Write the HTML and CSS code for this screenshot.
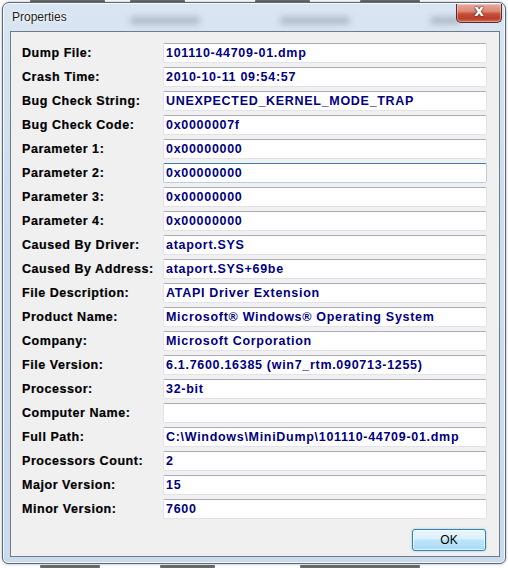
FILE: index.html
```html
<!DOCTYPE html>
<html>
<head>
<meta charset="utf-8">
<link rel="stylesheet" href="styles.css">
</head>
<body>
<div class="backdrop">
  <span class="topsmear t1"></span><span class="topsmear t2"></span><span class="topsmear t3"></span><span class="topsmear t4"></span>
  <span class="topsmear b1"></span><span class="topsmear b2"></span><span class="topsmear b3"></span>
  <div class="window">
    <div class="titlebar">
      <span class="smear s1"></span><span class="smear s2"></span><span class="smear s3"></span>
      <span class="title">Properties</span>
      <div class="close"><span class="xglyph">x</span></div>
    </div>
    <div class="client">
      <div class="props">
        <div class="lbl">Dump File:</div><div class="box">101110-44709-01.dmp</div>
        <div class="lbl">Crash Time:</div><div class="box">2010-10-11 09:54:57</div>
        <div class="lbl">Bug Check String:</div><div class="box">UNEXPECTED_KERNEL_MODE_TRAP</div>
        <div class="lbl">Bug Check Code:</div><div class="box">0x0000007f</div>
        <div class="lbl">Parameter 1:</div><div class="box">0x00000000</div>
        <div class="lbl">Parameter 2:</div><div class="box focus">0x00000000</div>
        <div class="lbl">Parameter 3:</div><div class="box">0x00000000</div>
        <div class="lbl">Parameter 4:</div><div class="box">0x00000000</div>
        <div class="lbl">Caused By Driver:</div><div class="box">ataport.SYS</div>
        <div class="lbl">Caused By Address:</div><div class="box">ataport.SYS+69be</div>
        <div class="lbl">File Description:</div><div class="box">ATAPI Driver Extension</div>
        <div class="lbl">Product Name:</div><div class="box">Microsoft® Windows® Operating System</div>
        <div class="lbl">Company:</div><div class="box">Microsoft Corporation</div>
        <div class="lbl">File Version:</div><div class="box">6.1.7600.16385 (win7_rtm.090713-1255)</div>
        <div class="lbl">Processor:</div><div class="box">32-bit</div>
        <div class="lbl">Computer Name:</div><div class="box"></div>
        <div class="lbl">Full Path:</div><div class="box">C:\Windows\MiniDump\101110-44709-01.dmp</div>
        <div class="lbl">Processors Count:</div><div class="box">2</div>
        <div class="lbl">Major Version:</div><div class="box">15</div>
        <div class="lbl">Minor Version:</div><div class="box">7600</div>
      </div>
      <div class="actions"><button class="ok">OK</button></div>
    </div>
  </div>
</div>
</body>
</html>
```
FILE: styles.css
```css
html, body {
  margin: 0;
  padding: 0;
}
body {
  width: 508px;
  height: 568px;
  overflow: hidden;
  background: #ffffff;
}
.backdrop {
  position: relative;
  width: 508px;
  height: 568px;
  padding: 2px 0 0 2px;
  box-sizing: border-box;
}
.topsmear {
  position: absolute;
  height: 3px;
  background: #6a6a6a;
  border-radius: 1px;
}
.t1 { top: 0; left: 30px; width: 75px; }
.t2 { top: 0; left: 130px; width: 55px; }
.t3 { top: 0; left: 255px; width: 55px; }
.t4 { top: 0; left: 360px; width: 60px; }
.b1 { top: 565px; left: 40px; width: 60px; }
.b2 { top: 565px; left: 160px; width: 55px; }
.b3 { top: 565px; left: 300px; width: 120px; }
.window {
  position: relative;
  width: 504px;
  height: 562px;
  box-sizing: border-box;
  border: 1px solid #5a6b7c;
  border-radius: 7px 7px 6px 6px;
  background: linear-gradient(to bottom, #d9e5f2 0%, #cfdeee 30%, #c9daec 100%);
  box-shadow: inset 0 0 0 1px rgba(255,255,255,0.75), 0 0 3px rgba(0,0,0,0.35);
  display: flex;
  flex-direction: column;
  padding: 0 5px 6px 7px;
}
.titlebar {
  position: relative;
  height: 28px;
  flex: none;
  display: flex;
  align-items: center;
}
.smear {
  position: absolute;
  top: 14px;
  height: 7px;
  border-radius: 4px;
  background: rgba(90, 100, 115, 0.35);
  filter: blur(3px);
}
.s1 { left: 120px; width: 70px; }
.s2 { left: 270px; width: 70px; }
.s3 { left: 420px; width: 30px; }
.title {
  position: relative;
  margin-left: 2px;
  margin-top: 0;
  font-family: "Liberation Sans", Arial, sans-serif;
  font-size: 12px;
  color: #1e1e1e;
  text-shadow: 0 0 6px rgba(255,255,255,0.9), 0 0 3px rgba(255,255,255,0.9);
}
.close {
  position: absolute;
  right: -2px;
  top: 1px;
  width: 46px;
  height: 19px;
  box-sizing: border-box;
  border: 1px solid #5b2a23;
  border-top: none;
  border-radius: 0 0 5px 5px;
  background: linear-gradient(to bottom, #e9a99c 0%, #dd8878 40%, #c75039 55%, #b9402b 80%, #d36a52 100%);
  box-shadow: inset 0 0 0 1px rgba(255,255,255,0.35);
  display: flex;
  align-items: center;
  justify-content: center;
}
.xglyph {
  font-family: "DejaVu Sans", sans-serif;
  font-weight: bold;
  font-size: 15px;
  line-height: 15px;
  margin-top: -3px;
  color: #ffffff;
  text-shadow: 0 0 1px #3a1a14, 0 0 2px #3a1a14;
}
.client {
  flex: 1;
  box-sizing: border-box;
  border: 1px solid #6d7b8a;
  background: #f0f0f0;
  padding: 11px 13px 0 11px;
  display: flex;
  flex-direction: column;
}
.props {
  display: grid;
  grid-template-columns: 141px 324px;
  grid-auto-rows: 20px;
  row-gap: 4px;
}
.lbl {
  font-family: "Liberation Sans", Arial, sans-serif;
  font-weight: bold;
  font-size: 12.5px;
  letter-spacing: 0.55px;
  color: #000000;
  line-height: 20px;
  white-space: nowrap;
  -webkit-text-stroke: 0.2px #000;
}
.box {
  box-sizing: border-box;
  background: #ffffff;
  border: 1px solid #e2e3ea;
  border-top-color: #abadb3;
  border-radius: 2px;
  font-family: "Liberation Sans", Arial, sans-serif;
  font-weight: bold;
  font-size: 12.5px;
  letter-spacing: 0.7px;
  color: #000080;
  line-height: 18px;
  padding-left: 2px;
  white-space: nowrap;
  overflow: hidden;
}
.box.focus {
  border-color: #b5cfe7;
  border-top-color: #3d7bad;
}
.actions {
  display: flex;
  justify-content: flex-end;
  margin-top: 10px;
}
.ok {
  width: 74px;
  height: 22px;
  box-sizing: border-box;
  border: 1px solid #3c7fb1;
  border-radius: 3px;
  background: linear-gradient(to bottom, #eaf6fd 0%, #d9f0fc 45%, #bee6fd 50%, #a7d9f5 100%);
  box-shadow: inset 0 0 0 1px rgba(255,255,255,0.7), 0 0 2px #6ab9e6;
  font-family: "Liberation Sans", Arial, sans-serif;
  font-size: 12px;
  color: #000;
  padding: 0;
}
```
